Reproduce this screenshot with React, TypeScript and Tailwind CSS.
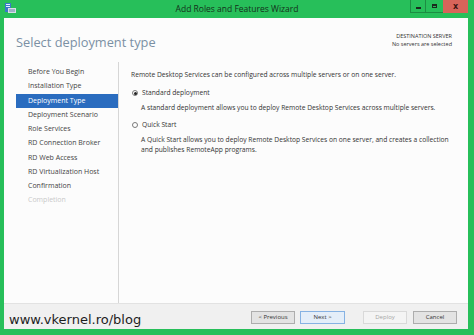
import React from 'react';

const navItems = [
  'Before You Begin',
  'Installation Type',
  'Deployment Type',
  'Deployment Scenario',
  'Role Services',
  'RD Connection Broker',
  'RD Web Access',
  'RD Virtualization Host',
  'Confirmation',
  'Completion',
];

const Radio = ({ checked }: { checked?: boolean }) => (
  <span className="w-[6px] h-[6px] rounded-full border border-[#7a7a7a] bg-white flex items-center justify-center shrink-0">
    {checked && <span className="w-[3px] h-[3px] rounded-full bg-[#222]" />}
  </span>
);

const App = () => {
  return (
    <div className="w-[474px] h-[335px] bg-[#27bf5a] flex flex-col overflow-hidden font-['Open_Sans',sans-serif]">
      {/* Title bar */}
      <div className="h-[18px] grid grid-cols-[1fr_auto_1fr] items-start">
        <div className="pl-[5px] pt-[3px]">
          <svg width="11" height="10" viewBox="0 0 11 10">
            <rect x="0" y="0" width="6" height="9" fill="#3a78c9" />
            <rect x="1" y="1" width="4" height="1" fill="#dfefff" />
            <rect x="1" y="3" width="4" height="1" fill="#dfefff" />
            <rect x="3" y="5" width="8" height="5" fill="#d7dde6" />
            <rect x="4" y="6" width="6" height="3" fill="#9fb1c8" />
          </svg>
        </div>
        <div className="text-[8.5px] leading-[18px] text-[#14301b]">Add Roles and Features Wizard</div>
        <div className="flex justify-end pr-[6px]">
          <div className="w-[16px] h-[13px] border border-[#1d8c43] border-t-0 flex items-center justify-center">
            <span className="w-[5px] h-[2px] bg-[#1b2a1e] mt-[3px]" />
          </div>
          <div className="w-[17px] h-[13px] border-b border-[#1d8c43] flex items-center justify-center">
            <span className="w-[5px] h-[4px] border border-[#1b2a1e] border-t-2" />
          </div>
          <div className="w-[25px] h-[13px] bg-[#d8645a] flex items-center justify-center">
            <span className="text-[8px] leading-none font-bold text-[#3a1512] font-['DejaVu_Sans',sans-serif]">x</span>
          </div>
        </div>
      </div>

      {/* Client area */}
      <div className="flex-1 ml-[4px] mr-[6px] mb-[6px] bg-[#fcfcfc] flex flex-col">
        {/* Header */}
        <div className="h-[44px] flex justify-between items-start pl-[12px] pr-[16px]">
          <div className="text-[12.8px] leading-[20px] mt-[14px] text-[#7b90a4]">Select deployment type</div>
          <div className="mt-[15px] text-right text-[5.5px] leading-[7.6px] text-[#333]">
            <div>DESTINATION SERVER</div>
            <div>No servers are selected</div>
          </div>
        </div>

        {/* Body */}
        <div className="flex-1 flex">
          <div className="ml-[12px] w-[103px] border-r border-[#d6d6d6] pt-[3px] pb-[9px]">
            {navItems.map((item) => (
              <div
                key={item}
                className={`h-[14.25px] leading-[14.25px] pl-[12px] text-[7px] ${
                  item === 'Deployment Type'
                    ? 'bg-[#2a6cbf] text-white'
                    : item === 'Completion'
                    ? 'text-[#c9c9c9]'
                    : 'text-[#444]'
                }`}
              >
                {item}
              </div>
            ))}
          </div>

          <div className="flex-1 pl-[12px] pt-[8px] text-[6.7px] leading-[10px] text-[#333]">
            <div>Remote Desktop Services can be configured across multiple servers or on one server.</div>
            <div className="mt-[8px] flex items-center gap-[4px] pl-[1px]">
              <Radio checked />
              <span>Standard deployment</span>
            </div>
            <div className="mt-[5px] pl-[10px]">
              A standard deployment allows you to deploy Remote Desktop Services across multiple servers.
            </div>
            <div className="mt-[7px] flex items-center gap-[4px] pl-[1px]">
              <Radio />
              <span>Quick Start</span>
            </div>
            <div className="mt-[5px] pl-[10px] leading-[9.5px] pr-[12px]">
              A Quick Start allows you to deploy Remote Desktop Services on one server, and creates a collection
              and publishes RemoteApp programs.
            </div>
          </div>
        </div>

        {/* Footer */}
        <div className="h-[26px] bg-[#f0f0f0] border-t border-[#e2e2e2] flex items-center pl-[5px] pr-[11px]">
          <div className="flex-1 text-[13px] leading-none pt-[5px] text-[#1e1e1e] font-['DejaVu_Sans',sans-serif]">
            www.vkernel.ro/blog
          </div>
          <div className="flex items-center mt-[2px]">
            <button className="w-[44px] h-[13px] bg-[#e3e3e3] border border-[#adadad] text-[6px] text-[#333]">&lt; Previous</button>
            <button className="ml-[5px] w-[45px] h-[13px] bg-[#e4eef9] border border-[#86b2e3] text-[6px] text-[#333]">Next &gt;</button>
            <button className="ml-[18px] w-[44px] h-[13px] bg-[#f4f4f4] border border-[#d9d9d9] text-[6px] text-[#a5a5a5]">Deploy</button>
            <button className="ml-[6px] w-[44px] h-[13px] bg-[#e3e3e3] border border-[#adadad] text-[6px] text-[#333]">Cancel</button>
          </div>
        </div>
      </div>
    </div>
  );
};

export default App;
